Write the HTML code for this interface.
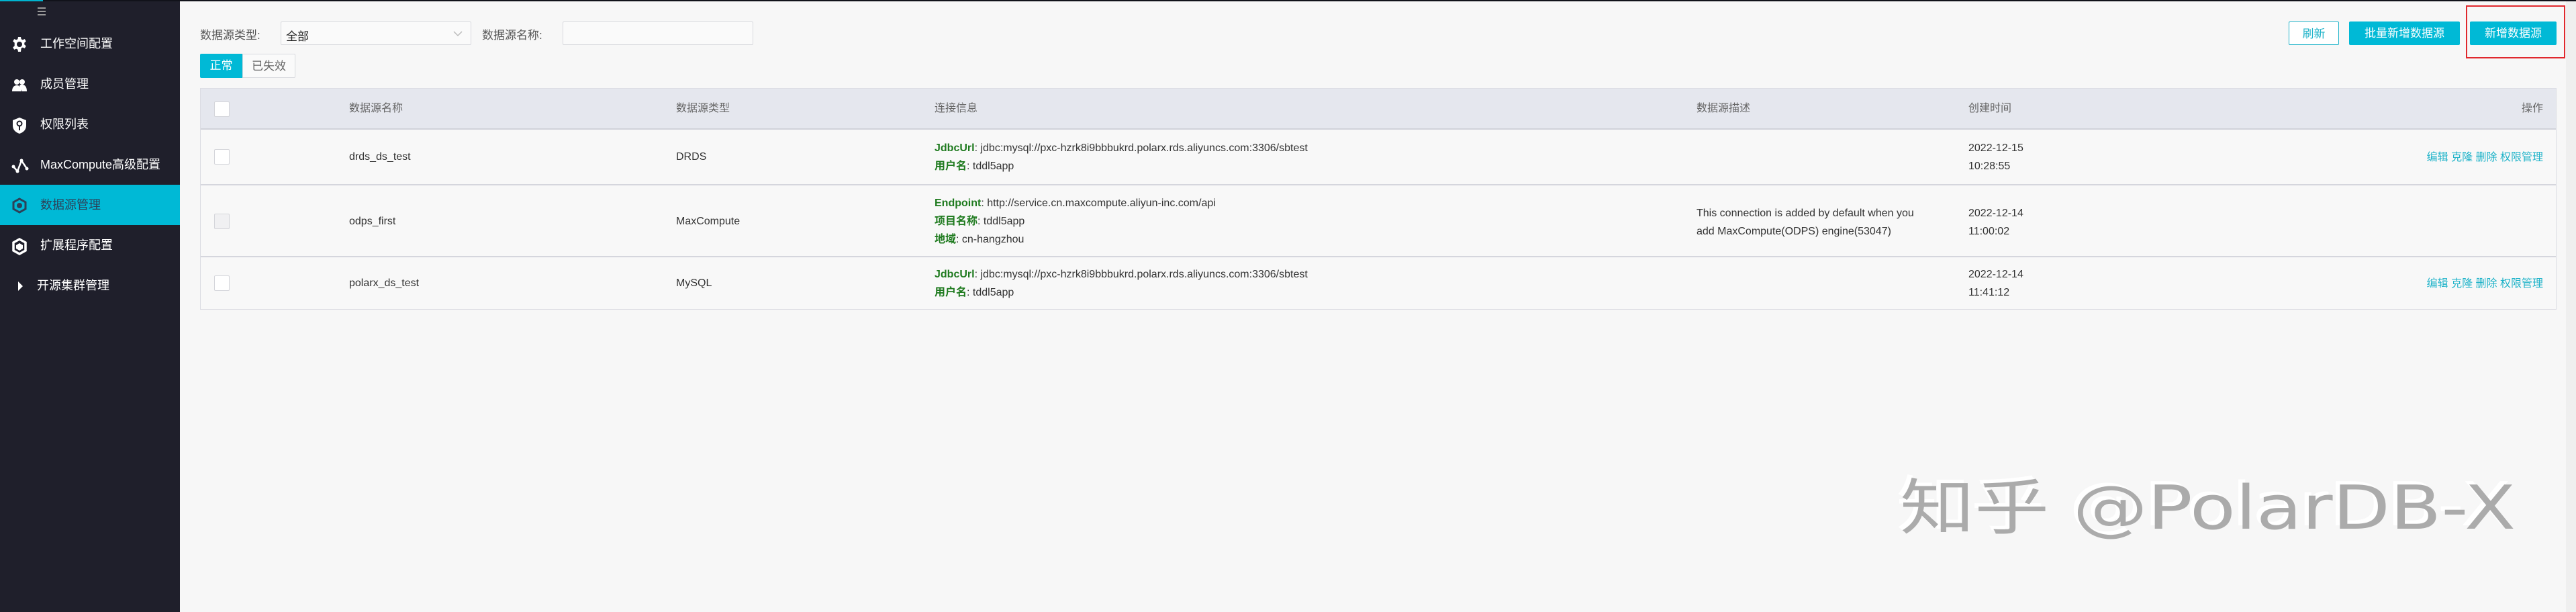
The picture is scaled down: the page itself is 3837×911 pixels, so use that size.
<!DOCTYPE html>
<html><head><meta charset="utf-8"><style>
*{margin:0;padding:0;box-sizing:border-box}
body{width:3837px;height:911px;background:#f7f7f7;font-family:"Liberation Sans","Noto Sans CJK SC",sans-serif;position:relative;overflow:hidden;color:#333;font-size:16px}
.top{position:absolute;left:0;top:0;width:3837px;height:2px;background:#11121a}
.top i{position:absolute;left:0;top:0;width:64px;height:2px;background:#00b4d0}
.side{position:absolute;left:0;top:2px;width:268px;height:909px;background:#1f1f2b}
.ham{position:absolute;left:56px;top:9px;width:12px;color:#aaa}
.ham b{display:block;height:2px;background:#999;margin-bottom:3px}
.mi{position:absolute;left:0;width:268px;height:60px;color:#fff;font-size:18px;line-height:60px}
.mi svg{position:absolute;left:17px;top:19px}
.mi span{position:absolute;left:60px}
.mi.act{background:#00b9d6;color:#2d4057}
.abs{position:absolute}
.lbl{font-size:17px;color:#555}
.box{border:1px solid #d8d9de;background:#fafafa;border-radius:2px}
.tab{position:absolute;top:80px;height:36px;line-height:36px;font-size:17px;text-align:center}
.btn{position:absolute;top:32px;height:35px;line-height:35px;text-align:center;font-size:17px;border-radius:2px}
.tbl{position:absolute;left:298px;top:131px;width:3510px;height:330px;border:1px solid #dcdde3;background:#f8f8f8}
.th{position:absolute;left:0;top:0;width:100%;height:61px;background:#e5e7ee;border-bottom:2px solid #d0d2da}
.row{position:absolute;left:0;width:100%;border-bottom:2px solid #d5d6dd}
.cb{position:absolute;left:20px;width:23px;height:23px;border:1px solid #d5d6db;background:#fff;border-radius:2px}
.t{position:absolute;white-space:nowrap;line-height:27px}
.g{color:#1e7a1e;font-weight:bold}
.hd{color:#666;font-size:16px}
.op{color:#1fb3c9}
.wm{position:absolute;left:2830px;top:703px;font-family:"DejaVu Sans","Noto Sans CJK SC",sans-serif;font-size:90px;line-height:1.2;color:#ababab;text-shadow:-5px -5px 0 #fff;white-space:nowrap;transform:scaleX(1.235);transform-origin:0 0}
</style></head><body>
<div class="top"><i></i></div>
<div class="side">
<div class="ham"><b></b><b></b><b></b></div>
<div class="mi" style="top:33px"><svg width="24" height="24" viewBox="0 0 24 24"><path fill="#fff" d="M10 1h4l.6 3.2 2.2 1.2 3-1.3 2 3.4-2.5 2.1v2.8l2.5 2.1-2 3.4-3-1.3-2.2 1.2L14 23h-4l-.6-3.2-2.2-1.2-3 1.3-2-3.4 2.5-2.1V9.6L2.2 7.5l2-3.4 3 1.3 2.2-1.2z"/><circle cx="12" cy="12" r="4" fill="#1f1f2b"/></svg><span>工作空间配置</span></div>
<div class="mi" style="top:93px"><svg width="24" height="24" viewBox="0 0 24 24"><circle cx="8" cy="8" r="4" fill="#fff"/><circle cx="16" cy="8" r="4" fill="#fff"/><path fill="#fff" d="M1 22c0-6 3-9 7-9s7 3 7 9zM12 13c1-1 2-1 4-1 4 0 7 3 7 10h-7"/></svg><span>成员管理</span></div>
<div class="mi" style="top:153px"><svg width="24" height="26" viewBox="0 0 24 26"><path fill="#fff" d="M12 1l10 4v8c0 6-4 10-10 12C6 23 2 19 2 13V5z"/><circle cx="12" cy="10" r="3.5" fill="none" stroke="#1f1f2b" stroke-width="2"/><path d="M12 13v7" stroke="#1f1f2b" stroke-width="2"/></svg><span>权限列表</span></div>
<div class="mi" style="top:213px"><svg width="26" height="24" viewBox="0 0 26 24"><path d="M3 14l6 7 6-16 8 12" fill="none" stroke="#fff" stroke-width="2.5"/><circle cx="3" cy="14" r="2.5" fill="#fff"/><circle cx="9" cy="21" r="2.5" fill="#fff"/><circle cx="15" cy="5" r="2.5" fill="#fff"/><circle cx="23" cy="17" r="2.5" fill="#fff"/></svg><span>MaxCompute高级配置</span></div>
<div class="mi act" style="top:273px"><svg width="24" height="24" viewBox="0 0 24 24"><path d="M12 2l9 5v10l-9 5-9-5V7z" fill="none" stroke="#2d4057" stroke-width="3"/><circle cx="12" cy="12" r="4" fill="#2d4057"/></svg><span>数据源管理</span></div>
<div class="mi" style="top:333px"><svg width="24" height="26" viewBox="0 0 24 26"><path d="M12 2l9 5v12l-9 5-9-5V7z" fill="none" stroke="#fff" stroke-width="3.5"/><path d="M12 8l5 3v5l-5 3-5-3v-5z" fill="#fff"/></svg><span>扩展程序配置</span></div>
<div class="mi" style="top:393px"><svg width="24" height="24" viewBox="0 0 24 24" style="left:20px"><path d="M7 5l7 7-7 7z" fill="#fff"/></svg><span style="left:55px">开源集群管理</span></div>
</div>

<div class="abs lbl" style="left:298px;top:38px">数据源类型:</div>
<div class="abs box" style="left:418px;top:32px;width:284px;height:35px"><span class="abs" style="left:7px;top:7px;font-size:17px;color:#222">全部</span><svg class="abs" style="left:256px;top:12px" width="14" height="10" viewBox="0 0 14 10"><path d="M1 2l6 6 6-6" fill="none" stroke="#bbb" stroke-width="1.5"/></svg></div>
<div class="abs lbl" style="left:718px;top:38px">数据源名称:</div>
<div class="abs box" style="left:838px;top:32px;width:284px;height:35px"></div>
<div class="tab" style="left:298px;width:63px;background:#00b9d6;color:#fff;border-radius:2px 0 0 2px">正常</div>
<div class="tab box" style="left:361px;width:79px;color:#666;border-radius:0 2px 2px 0">已失效</div>

<div class="btn" style="left:3409px;width:75px;border:1px solid #1fb3c9;color:#1fb3c9;background:#fff">刷新</div>
<div class="btn" style="left:3499px;width:165px;background:#00b9d6;color:#fff">批量新增数据源</div>
<div class="btn" style="left:3679px;width:129px;background:#00b9d6;color:#fff">新增数据源</div>
<div class="abs" style="left:3673px;top:8px;width:148px;height:79px;border:2px solid #e0282d"></div>

<div class="tbl">
<div class="th"><div class="cb" style="top:19px"></div>
<div class="t hd" style="left:221px;top:16px">数据源名称</div>
<div class="t hd" style="left:708px;top:16px">数据源类型</div>
<div class="t hd" style="left:1093px;top:16px">连接信息</div>
<div class="t hd" style="left:2228px;top:16px">数据源描述</div>
<div class="t hd" style="left:2633px;top:16px">创建时间</div>
<div class="t hd" style="right:19px;top:16px">操作</div></div>
<div class="row" style="top:62px;height:82px"><div class="cb" style="top:28px"></div>
<div class="t" style="left:221px;top:26px">drds_ds_test</div>
<div class="t" style="left:708px;top:26px">DRDS</div>
<div class="t" style="left:1093px;top:13px"><span class="g">JdbcUrl</span>:  jdbc:mysql://pxc-hzrk8i9bbbukrd.polarx.rds.aliyuncs.com:3306/sbtest<br><span class="g">用户名</span>:  tddl5app</div>
<div class="t" style="left:2633px;top:13px">2022-12-15<br>10:28:55</div>
<div class="t op" style="right:19px;top:27px">编辑 克隆 删除 权限管理</div></div>
<div class="row" style="top:144px;height:107px"><div class="cb" style="top:42px;background:#f0f0f2"></div>
<div class="t" style="left:221px;top:40px">odps_first</div>
<div class="t" style="left:708px;top:40px">MaxCompute</div>
<div class="t" style="left:1093px;top:13px"><span class="g">Endpoint</span>:  http://service.cn.maxcompute.aliyun-inc.com/api<br><span class="g">项目名称</span>:  tddl5app<br><span class="g">地域</span>:  cn-hangzhou</div>
<div class="t" style="left:2228px;top:28px">This connection is added by default when you<br>add MaxCompute(ODPS) engine(53047)</div>
<div class="t" style="left:2633px;top:28px">2022-12-14<br>11:00:02</div></div>
<div class="row" style="top:251px;height:79px;border-bottom:none"><div class="cb" style="top:27px"></div>
<div class="t" style="left:221px;top:25px">polarx_ds_test</div>
<div class="t" style="left:708px;top:25px">MySQL</div>
<div class="t" style="left:1093px;top:12px"><span class="g">JdbcUrl</span>:  jdbc:mysql://pxc-hzrk8i9bbbukrd.polarx.rds.aliyuncs.com:3306/sbtest<br><span class="g">用户名</span>:  tddl5app</div>
<div class="t" style="left:2633px;top:12px">2022-12-14<br>11:41:12</div>
<div class="t op" style="right:19px;top:26px">编辑 克隆 删除 权限管理</div></div>
</div>
<div class="abs" style="left:3822px;top:2px;width:15px;height:909px;background:#efefef"></div>
<div class="wm">知乎 @PolarDB-X</div>
</body></html>
